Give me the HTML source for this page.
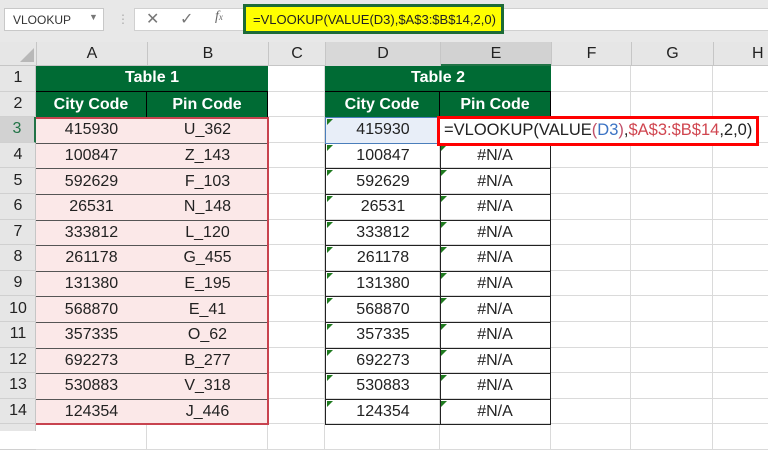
<!DOCTYPE html><html><head><style>
body{margin:0;width:768px;height:431px;overflow:hidden;background:#fff;font-family:"Liberation Sans",sans-serif;position:relative}
.a{position:absolute;box-sizing:border-box}
.c{position:absolute;box-sizing:border-box;display:flex;align-items:center;justify-content:center;font-size:16px;color:#222}
</style></head><body>
<div class="a" style="left:0;top:0;width:768px;height:42px;background:#e8e8e8"></div>
<div class="a" style="left:4px;top:8px;width:100px;height:23px;background:#fff;border:1px solid #c8c8c8;font-size:12px;color:#333;padding:4px 0 0 8px">VLOOKUP<span style="position:absolute;left:84px;top:3px;font-size:9px;color:#777">▼</span></div>
<div class="a" style="left:117px;top:12px;color:#aaa;font-size:12px">⋮</div>
<div class="a" style="left:134px;top:8px;width:640px;height:23px;background:#fff;border:1px solid #d0d0d0"></div>
<div class="a" style="left:146px;top:9px;color:#777;font-size:16px">✕</div>
<div class="a" style="left:180px;top:9px;color:#777;font-size:16px">✓</div>
<div class="a" style="left:215px;top:9px;color:#666;font-size:14px;font-style:italic;font-family:'Liberation Serif',serif">f<span style="font-size:9px">x</span></div>
<div class="a" style="left:243px;top:4px;width:261px;height:30px;background:#ffff00;border:3px solid #1d6b37;font-size:13px;color:#222;padding:5px 0 0 7px;white-space:nowrap">=VLOOKUP(VALUE(D3),$A$3:$B$14,2,0)</div>
<div class="a" style="left:0;top:42px;width:768px;height:24px;background:#e6e6e6;border-bottom:1px solid #c6c6c6"></div>
<div class="a" style="left:20px;top:48px;width:0;height:0;border-left:14px solid transparent;border-bottom:14px solid #b8b8b8"></div>
<div class="a" style="left:325px;top:42px;width:115px;height:24px;background:#d8d8d8"></div>
<div class="a" style="left:440px;top:42px;width:111px;height:24px;background:#d2d2d2;border-bottom:2px solid #217346"></div>
<div class="c" style="left:36px;top:42px;width:111px;height:24px;border-left:1px solid #c6c6c6">A</div>
<div class="c" style="left:147px;top:42px;width:121px;height:24px;border-left:1px solid #c6c6c6">B</div>
<div class="c" style="left:268px;top:42px;width:57px;height:24px;border-left:1px solid #c6c6c6">C</div>
<div class="c" style="left:325px;top:42px;width:115px;height:24px;border-left:1px solid #c6c6c6">D</div>
<div class="c" style="left:440px;top:42px;width:111px;height:24px;border-left:1px solid #c6c6c6">E</div>
<div class="c" style="left:551px;top:42px;width:80px;height:24px;border-left:1px solid #c6c6c6">F</div>
<div class="c" style="left:631px;top:42px;width:82px;height:24px;border-left:1px solid #c6c6c6">G</div>
<div class="c" style="left:713px;top:42px;width:80px;height:24px;border-left:1px solid #c6c6c6;justify-content:flex-start;padding-left:38px">H</div>
<div class="a" style="left:0;top:66px;width:36px;height:365px;background:#e6e6e6;border-right:1px solid #c6c6c6"></div>
<div id="g"></div>
<script>
var A=["415930","100847","592629","26531","333812","261178","131380","568870","357335","692273","530883","124354"];
var B=["U_362","Z_143","F_103","N_148","L_120","G_455","E_195","E_41","O_62","B_277","V_318","J_446"];
var h='',H=25.6,T=66;
function y(r){return T+(r-1)*H;}
var cols=[36,147,268,325,440,551,631,713,800];
for(var r=1;r<=15;r++){var t=y(r);
 h+='<div class="c" style="left:0;top:'+t+'px;width:36px;height:'+H+'px;border-bottom:1px solid #d0d0d0;'+(r==3?'background:#d2d2d2;color:#217346;border-right:2px solid #217346;':'')+'">'+(r<15?r:'')+'</div>';
 for(var c=0;c<8;c++)h+='<div class="a" style="left:'+cols[c]+'px;top:'+t+'px;width:'+(cols[c+1]-cols[c])+'px;height:'+H+'px;border-right:1px solid #dadada;border-bottom:1px solid #dadada"></div>';
}
var G='#006b34';
[[36,268,'Table 1'],[325,551,'Table 2']].forEach(function(p){
 h+='<div class="c" style="left:'+p[0]+'px;top:'+y(1)+'px;width:'+(p[1]-p[0])+'px;height:'+H+'px;background:'+G+';color:#fff;font-weight:bold;border-bottom:1px solid #000">'+p[2]+'</div>';
});
[[36,147,'City Code'],[147,268,'Pin Code'],[325,440,'City Code'],[440,551,'Pin Code']].forEach(function(p){
 h+='<div class="c" style="left:'+p[0]+'px;top:'+y(2)+'px;width:'+(p[1]-p[0])+'px;height:'+(H+1)+'px;background:'+G+';color:#fff;font-weight:bold;border-right:1px solid #000">'+p[2]+'</div>';
});
for(var i=0;i<12;i++){var t=y(i+3);
 h+='<div class="c" style="left:36px;top:'+t+'px;width:112px;height:'+(H+1)+'px;background:#fbe8e8;border:1px solid #555;border-left:none">'+A[i]+'</div>';
 h+='<div class="c" style="left:147px;top:'+t+'px;width:121px;height:'+(H+1)+'px;background:#fbe8e8;border:1px solid #555;border-left:none;border-right:none">'+B[i]+'</div>';
 h+='<div class="c" style="left:325px;top:'+t+'px;width:116px;height:'+(H+1)+'px;border:1px solid #222;'+(i==0?'background:#e8eef8;':'')+'">'+A[i]+'<span style="position:absolute;left:1px;top:1px;border-top:6px solid #1f7a1f;border-right:6px solid transparent"></span></div>';
 h+='<div class="c" style="left:440px;top:'+t+'px;width:111px;height:'+(H+1)+'px;border:1px solid #222;border-left:none">#N/A<span style="position:absolute;left:1px;top:1px;border-top:6px solid #1f7a1f;border-right:6px solid transparent"></span></div>';
}
h+='<div class="a" style="left:36px;top:'+y(3)+'px;width:233px;height:'+(12*H+1)+'px;border:2px solid #c8434f;border-left:none"></div>';
h+='<div class="a" style="left:325px;top:'+y(3)+'px;width:116px;height:'+(H+1)+'px;border:1.5px solid #4a7ebb"></div>';
h+='<div class="c" style="left:437px;top:'+(y(3)-1)+'px;width:322px;height:'+(H+4)+'px;border:3px solid #f00;background:#fff;font-size:16.5px;justify-content:flex-start;padding-left:4px;white-space:nowrap">=VLOOKUP(VALUE<span style="color:#c0506a">(</span><span style="color:#3b73c4">D3</span><span style="color:#c0506a">)</span>,<span style="color:#d0454f">$A$3:$B$14</span>,2,0)</div>';
document.getElementById('g').innerHTML=h;
</script>
</body></html>
